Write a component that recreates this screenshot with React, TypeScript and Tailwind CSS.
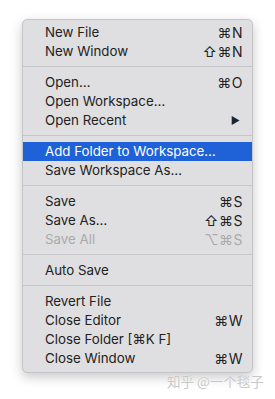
type Item = { label: string; key?: string; disabled?: boolean; active?: boolean; arrow?: boolean };

const groups: Item[][] = [
  [
    { label: "New File", key: "⌘N" },
    { label: "New Window", key: "⇧⌘N" },
  ],
  [
    { label: "Open…", key: "⌘O" },
    { label: "Open Workspace…" },
    { label: "Open Recent", arrow: true },
  ],
  [
    { label: "Add Folder to Workspace…", active: true },
    { label: "Save Workspace As…" },
  ],
  [
    { label: "Save", key: "⌘S" },
    { label: "Save As…", key: "⇧⌘S" },
    { label: "Save All", key: "⌥⌘S", disabled: true },
  ],
  [{ label: "Auto Save" }],
  [
    { label: "Revert File" },
    { label: "Close Editor", key: "⌘W" },
    { label: "Close Folder [⌘K F]" },
    { label: "Close Window", key: "⌘W" },
  ],
];

const Row = ({ item }: { item: Item }) => {
  const color = item.active ? "bg-[#1f62d8] text-white" : item.disabled ? "text-[#a9a9ab]" : "text-[#222222]";
  return (
    <div className={`flex h-[19px] items-center justify-between pl-[22px] pr-[9px] ${color}`}>
      <span>{item.label}</span>
      {item.key && <span className="text-[14px] tracking-[0.5px]">{item.key}</span>}
      {item.arrow && <span className="pr-[3px] text-[10px]">▶</span>}
    </div>
  );
};

export default function App() {
  return (
    <div className="relative h-[399px] w-[275px] bg-white pl-[22px] pt-[19px] font-['Inter','Noto_Sans',sans-serif] text-[13.3px]">
      <div className="w-[231px] rounded-[5px] border border-[#c4c4c6] bg-[#dfdfe1] pb-[4px] pt-[3px] shadow-[0_4px_12px_rgba(0,0,0,0.22)]">
        {groups.map((g, i) => (
          <div key={i}>
            {i > 0 && (
              <div className="pb-[6px] pt-[5px]">
                <div className="h-px bg-[#c6c6c9]" />
              </div>
            )}
            {g.map((item) => (
              <Row key={item.label} item={item} />
            ))}
          </div>
        ))}
      </div>
      <div className="absolute left-[167px] top-[371px] font-['Noto_Sans_CJK_SC',sans-serif] text-[13.5px] text-[#c9c9c9] [text-shadow:0_0_1px_#fff]">
        知乎 @一个毯子
      </div>
    </div>
  );
}
